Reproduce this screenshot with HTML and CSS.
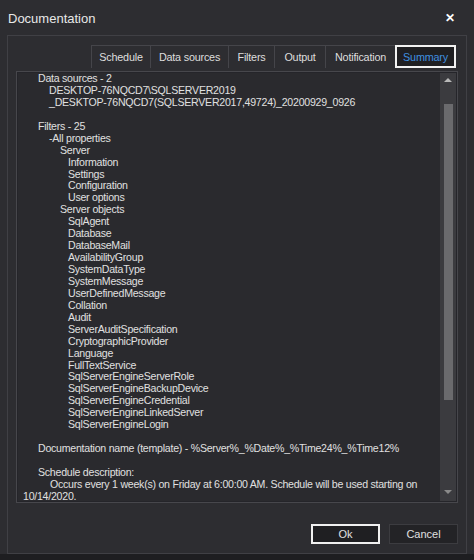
FILE: index.html
```html
<!DOCTYPE html>
<html>
<head>
<meta charset="utf-8">
<link rel="stylesheet" href="styles.css">
</head>
<body>
<div class="window">
  <div class="titlebar">
    <span class="title">Documentation</span>
    <span class="close">✕</span>
  </div>
  <div class="panel">
    <div class="tabs">
      <div class="tab t-schedule">Schedule</div>
      <div class="tab t-sources">Data sources</div>
      <div class="tab t-filters">Filters</div>
      <div class="tab t-output">Output</div>
      <div class="tab t-notif">Notification</div>
      <div class="tab t-summary active">Summary</div>
    </div>
    <div class="content">
      <div class="text">
        <div class="ln l0">Data sources - 2</div>
        <div class="ln l1">DESKTOP-76NQCD7\SQLSERVER2019</div>
        <div class="ln l1">_DESKTOP-76NQCD7(SQLSERVER2017,49724)_20200929_0926</div>
        <div class="ln blank"></div>
        <div class="ln l0">Filters - 25</div>
        <div class="ln l1">-All properties</div>
        <div class="ln l2">Server</div>
        <div class="ln l3">Information</div>
        <div class="ln l3">Settings</div>
        <div class="ln l3">Configuration</div>
        <div class="ln l3">User options</div>
        <div class="ln l2">Server objects</div>
        <div class="ln l3">SqlAgent</div>
        <div class="ln l3">Database</div>
        <div class="ln l3">DatabaseMail</div>
        <div class="ln l3">AvailabilityGroup</div>
        <div class="ln l3">SystemDataType</div>
        <div class="ln l3">SystemMessage</div>
        <div class="ln l3">UserDefinedMessage</div>
        <div class="ln l3">Collation</div>
        <div class="ln l3">Audit</div>
        <div class="ln l3">ServerAuditSpecification</div>
        <div class="ln l3">CryptographicProvider</div>
        <div class="ln l3">Language</div>
        <div class="ln l3">FullTextService</div>
        <div class="ln l3">SqlServerEngineServerRole</div>
        <div class="ln l3">SqlServerEngineBackupDevice</div>
        <div class="ln l3">SqlServerEngineCredential</div>
        <div class="ln l3">SqlServerEngineLinkedServer</div>
        <div class="ln l3">SqlServerEngineLogin</div>
        <div class="ln blank"></div>
        <div class="ln l0">Documentation name (template) - %Server%_%Date%_%Time24%_%Time12%</div>
        <div class="ln blank"></div>
        <div class="ln l0">Schedule description:</div>
        <div class="ln wrap">Occurs every 1 week(s) on Friday at 6:00:00 AM. Schedule will be used starting on 10/14/2020.</div>
      </div>
      <div class="scrollbar">
        <div class="arrow up"></div>
        <div class="track"><div class="thumb"></div></div>
        <div class="arrow down"></div>
      </div>
    </div>
    <div class="footer">
      <div class="btn primary">Ok</div>
      <div class="btn">Cancel</div>
    </div>
  </div>
  <div class="bottomstrip"></div>
</div>
</body>
</html>
```

FILE: styles.css
```css
* { box-sizing: border-box; }
html, body {
  margin: 0;
  padding: 0;
  width: 474px;
  height: 560px;
  overflow: hidden;
  background: #2d2d31;
  font-family: "Liberation Sans", Arial, sans-serif;
  color: #e2e2e2;
}
.window {
  width: 474px;
  height: 560px;
  display: flex;
  flex-direction: column;
  background: #2d2d31;
}
.titlebar {
  height: 35px;
  display: flex;
  align-items: center;
  justify-content: space-between;
  padding: 0 19px 0 8px;
}
.title {
  font-size: 13px;
  color: #e8e8e8;
  margin-top: 1px;
}
.close {
  font-size: 12px;
  font-weight: bold;
  color: #ffffff;
}
.panel {
  margin: 0 7px;
  height: 519px;
  border: 1px solid #404045;
  display: flex;
  flex-direction: column;
}
.tabs {
  display: flex;
  justify-content: flex-end;
  margin: 9px 10px 0 0;
  height: 23px;
}
.tab {
  height: 23px;
  border: 1px solid #45454a;
  border-bottom: none;
  margin-left: -1px;
  font-size: 10.8px;
  letter-spacing: -0.2px;
  color: #dedede;
  display: flex;
  align-items: center;
  justify-content: center;
  background: #2d2d31;
}
.t-schedule { width: 60px; }
.t-sources { width: 79px; }
.t-filters { width: 47px; }
.t-output { width: 52px; }
.t-notif { width: 71px; }
.t-summary { width: 61px; }
.tab.active {
  border: 2px solid #f2f2f2;
  background: #1f1f22;
  color: #3f8fe0;
  height: 23px;
}
.content {
  margin: 3px 8px 0 8px;
  height: 432px;
  border: 1px solid #47474c;
  box-shadow: inset 0 0 0 1px #25252a;
  background: #2a2a2e;
  display: flex;
  overflow: hidden;
}
.text {
  flex: 1;
  padding: 1px 0 0 6px;
  font-size: 10.6px;
  letter-spacing: -0.25px;
  line-height: 11.95px;
  color: #e0e0e0;
  overflow: hidden;
}
.ln { height: 11.95px; white-space: nowrap; }
.ln.l0 { padding-left: 15px; }
.ln.l1 { padding-left: 26px; }
.ln.l2 { padding-left: 37px; }
.ln.l3 { padding-left: 45px; }
.ln.wrap {
  white-space: normal;
  height: auto;
  text-indent: 27px;
  padding-right: 4px;
}
.scrollbar {
  width: 16px;
  margin: 1px 1px 1px 0;
  background: #3b3b3f;
  display: flex;
  flex-direction: column;
  align-items: center;
}
.arrow {
  width: 0;
  height: 0;
  border-left: 4px solid transparent;
  border-right: 4px solid transparent;
}
.arrow.up {
  margin-top: 5px;
  border-bottom: 4px solid #b8b8b8;
}
.arrow.down {
  margin-bottom: 7px;
  border-top: 4px solid #8a8a8a;
}
.track {
  flex: 1;
  width: 100%;
  display: flex;
  justify-content: center;
  padding-top: 22px;
  padding-bottom: 90px;
}
.thumb {
  width: 9px;
  background: #6a6a6d;
}
.footer {
  display: flex;
  justify-content: flex-end;
  gap: 9px;
  margin: 21px 8px 0 0;
}
.btn {
  width: 69px;
  height: 20px;
  border: 1px solid #3c3c40;
  background: #232326;
  font-size: 11px;
  color: #e0e0e0;
  display: flex;
  align-items: center;
  justify-content: center;
}
.btn.primary {
  border: 2px solid #f0f0f0;
  background: #1f1f22;
}
.bottomstrip {
  flex: 1;
  background: #1e1e21;
}
```
